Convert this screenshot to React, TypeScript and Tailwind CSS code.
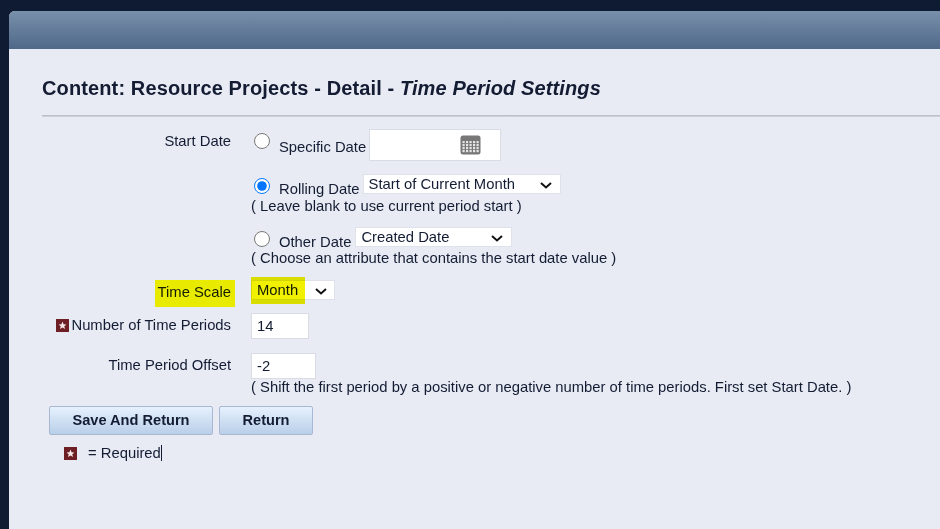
import React from 'react';

const RequiredIcon: React.FC<{ className?: string }> = ({ className }) => (
  <svg viewBox="0 0 13 13" className={className}>
    <rect width="13" height="13" fill="#6d1f24" />
    <path d="M6.5 2.6l1.1 2.6 2.8.2-2.1 1.8.7 2.8-2.5-1.5L4 10l.7-2.8-2.1-1.8 2.8-.2z" fill="#f4e6e6" />
  </svg>
);

const CalendarIcon: React.FC = () => (
  <svg viewBox="0 0 21 20" className="w-[21px] h-[20px]">
    <rect x="0.5" y="0.5" width="20" height="19" rx="2.5" fill="#777777" />
    {[6, 9, 12, 15].map((y) =>
      [2.5, 6, 9.5, 13, 16.5].map((x) => <rect key={`${x}-${y}`} x={x} y={y} width="2.2" height="2.2" fill="#e6e6e6" />)
    )}
  </svg>
);

const Hint: React.FC<{ className?: string; children: React.ReactNode }> = ({ className, children }) => (
  <div className={`text-[14.8px] leading-[16px] text-[#131c33] whitespace-nowrap ${className ?? ''}`}>{children}</div>
);

const Row: React.FC<{ label?: React.ReactNode; className?: string; children: React.ReactNode }> = ({ label, className, children }) => (
  <div className={`flex ${className ?? ''}`}>
    <div className="w-[189px] shrink-0 text-right text-[14.8px] leading-[16px] text-[#131c33] whitespace-nowrap">{label}</div>
    <div className="ml-[20px]">{children}</div>
  </div>
);

const Dropdown: React.FC<{ value: string; className: string; chevronRight: string }> = ({ value, className, chevronRight }) => (
  <div className={`relative h-[20px] ${className}`}>
    <select
      defaultValue={value}
      className="block w-full h-full appearance-none bg-white border border-[#dfe2ea] pl-[5px] text-[14.8px] leading-[16px] text-[#131c33] outline-none"
    >
      <option value={value}>{value}</option>
    </select>
    <svg viewBox="0 0 12 7" className={`absolute top-[8px] w-[12px] h-[7px] pointer-events-none ${chevronRight}`}>
      <path d="M1 1l5 4.5L11 1" fill="none" stroke="#111111" strokeWidth="2" />
    </svg>
  </div>
);

const inputCls =
  "block bg-white border border-[#d9dce5] text-[14.8px] text-[#131c33] px-[5px] outline-none";
const buttonCls =
  "h-[29px] rounded-[2px] border border-[#a9b8d2] bg-gradient-to-b from-[#e6f1fd] to-[#b9cfe9] text-[14.6px] font-bold text-[#131c33]";
const radioCls = "w-[16px] h-[16px] m-0 ml-[3px]";
const optionLabelCls = "ml-[9px] text-[14.8px] leading-[16px] text-[#131c33]";

export default function App() {
  return (
    <div className="w-[940px] h-[529px] overflow-hidden bg-[#0f1a33] pt-[11px] pl-[9px] font-['Liberation_Sans',Arial,sans-serif]">
      <div className="h-[518px] rounded-tl-[6px] overflow-hidden bg-[#e8ebf3] relative">
        <div className="h-[38px] bg-gradient-to-b from-[#7890aa] to-[#50698a]" />

        <div className="pl-[33px]">
          <h1 className="mt-[27px] text-[20px] leading-[24px] font-bold text-[#131c33] tracking-[0.12px]">
            Content: Resource Projects - Detail - <em>Time Period Settings</em>
          </h1>
          <div className="mt-[15px] h-[2px] bg-gradient-to-b from-[#b4b8c2] to-[#d5d8e0]" />

          <Row label="Start Date" className="mt-[16px]">
            <div className="-mt-[4px]">
              <div className="flex items-start">
                <input type="radio" name="start" className={`${radioCls} mt-[4px]`} />
                <span className={`${optionLabelCls} mt-[10px]`}>Specific Date</span>
                <div className="ml-[3px] w-[132px] h-[32px] bg-white border border-[#d9dce5] flex items-center justify-end pr-[19px]">
                  <CalendarIcon />
                </div>
              </div>

              <div className="flex items-start mt-[13px]">
                <input type="radio" name="start" defaultChecked className={`${radioCls} mt-[4px]`} />
                <span className={`${optionLabelCls} mt-[7px]`}>Rolling Date</span>
                <Dropdown value="Start of Current Month" className="ml-[3px] w-[198px]" chevronRight="right-[9px]" />
              </div>
              <Hint className="mt-[1px]">( Leave blank to use current period start )</Hint>

              <div className="flex items-start mt-[13px]">
                <input type="radio" name="start" className={`${radioCls} mt-[4px]`} />
                <span className={`${optionLabelCls} mt-[7px]`}>Other Date</span>
                <Dropdown value="Created Date" className="ml-[4px] w-[157px]" chevronRight="right-[9px]" />
              </div>
              <Hint>( Choose an attribute that contains the start date value )</Hint>
            </div>
          </Row>

          <Row className="mt-[14px]" label={<span className="block mt-[4px]">Time Scale</span>}>
            <Dropdown value="Month" className="w-[84px]" chevronRight="right-[8px]" />
          </Row>

          <Row
            className="mt-[17px]"
            label={
              <span className="flex items-center justify-end">
                <RequiredIcon className="w-[13px] h-[13px] mr-[2px]" />
                Number of Time Periods
              </span>
            }
          >
            <input readOnly value="14" className={`${inputCls} w-[58px] h-[26px] -mt-[4px]`} />
          </Row>

          <Row className="mt-[18px]" label="Time Period Offset">
            <div className="-mt-[4px]">
              <input readOnly value="-2" className={`${inputCls} w-[65px] h-[26px]`} />
              <Hint>( Shift the first period by a positive or negative number of time periods. First set Start Date. )</Hint>
            </div>
          </Row>

          <div className="flex gap-[6px] ml-[7px] mt-[11px]">
            <button className={`${buttonCls} w-[164px]`}>Save And Return</button>
            <button className={`${buttonCls} w-[94px]`}>Return</button>
          </div>

          <div className="flex items-center ml-[22px] mt-[10px] text-[14.8px] leading-[16px] text-[#131c33]">
            <RequiredIcon className="w-[13px] h-[13px]" />
            <span className="ml-[11px]">= Required</span>
            <span className="w-px h-[16px] bg-[#131c33]" />
          </div>
        </div>

        {/* marker highlights drawn over the page */}
        <div className="absolute left-[146px] top-[269px] w-[80px] h-[27px] bg-[#ffff00] mix-blend-multiply" />
        <div className="absolute left-[242px] top-[266px] w-[54px] h-[27px] bg-[#f0f000] mix-blend-multiply" />
      </div>
    </div>
  );
}
